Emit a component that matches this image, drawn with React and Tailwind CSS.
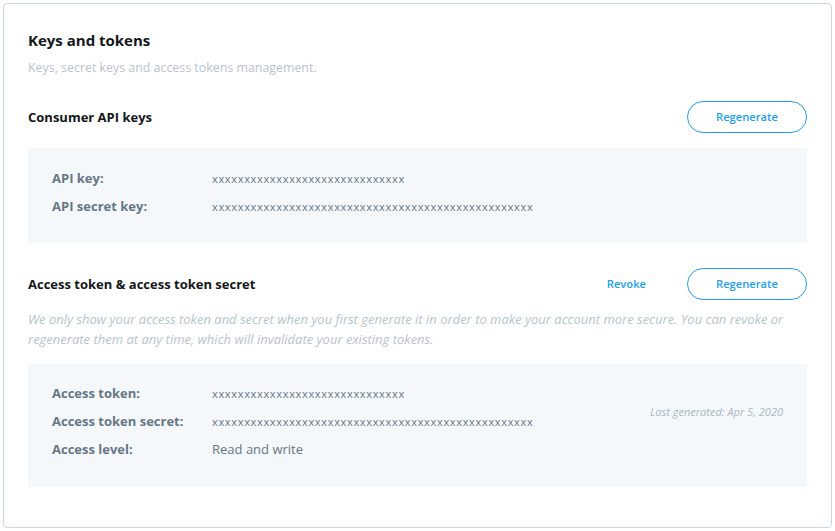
import React from "react";

const font = { fontFamily: '"Segoe UI", "Open Sans", "Noto Sans", sans-serif' };

const consumerKeys = [
  { id: 1, label: "API key:", value: "x".repeat(30) },
  { id: 2, label: "API secret key:", value: "x".repeat(50) },
];

const accessKeys = [
  { id: 1, label: "Access token:", value: "x".repeat(30), small: true },
  { id: 2, label: "Access token secret:", value: "x".repeat(50), small: true },
  { id: 3, label: "Access level:", value: "Read and write" },
];

const RegenerateBtn = () => (
  <button className="w-[120px] h-[32px] rounded-full border border-[#1da1f2] text-[#1da1f2] text-[11.2px] font-semibold bg-white">
    Regenerate
  </button>
);

const KeyRow = ({ label, value, small, first }) => (
  <div className={`flex items-center h-[20px] ${first ? "" : "mt-2"}`}>
    <span className="w-[160px] text-[13px] font-bold text-[#657786]">{label}</span>
    {small ? (
      <span className="text-[11px] text-[#657786] tracking-[0.67px]">{value}</span>
    ) : (
      <span className="text-[13px] text-[#657786]">{value}</span>
    )}
  </div>
);

const App = () => {
  return (
    <div className="w-[835px] h-[531px] bg-white p-[3px]" style={font}>
      <div className="w-[829px] h-[525px] border border-[#ccd6dd] rounded-[4px] px-6 pt-[26px] pb-[39px]">
        <h1 className="text-[15px] leading-[20px] font-bold text-[#14171a]">Keys and tokens</h1>
        <p className="mt-[10px] text-[12.4px] leading-[16px] text-[#b8c4cc]">
          Keys, secret keys and access tokens management.
        </p>

        <div className="mt-[25px] flex items-center justify-between">
          <h2 className="text-[13px] font-bold text-[#14171a] pt-[2px]">Consumer API keys</h2>
          <RegenerateBtn />
        </div>

        <div className="mt-[15px] bg-[#f5f8fa] pl-6 pt-[21px] pb-[26px]">
          {consumerKeys.map(({ id, label, value }) => (
            <KeyRow key={id} label={label} value={value} small first={id === 1} />
          ))}
        </div>

        <div className="mt-[25px] flex items-center justify-between">
          <h2 className="text-[13px] font-bold text-[#14171a] pt-[2px]">Access token &amp; access token secret</h2>
          <div className="flex items-center">
            <button className="text-[11.2px] font-semibold text-[#1da1f2] mr-[41px] pt-[1px]">Revoke</button>
            <RegenerateBtn />
          </div>
        </div>

        <p className="mt-[9px] text-[13px] leading-[20px] italic text-[#b8c4cc] pr-4">
          We only show your access token and secret when you first generate it in order to make your account more secure. You can revoke or regenerate them at any time, which will invalidate your existing tokens.
        </p>

        <div className="mt-[15px] bg-[#f5f8fa] pl-6 pr-6 pt-5 pb-[27px] flex justify-between">
          <div>
            {accessKeys.map(({ id, label, value, small }) => (
              <KeyRow key={id} label={label} value={value} small={small} first={id === 1} />
            ))}
          </div>
          <div className="mt-[20px] text-[11px] leading-[16px] italic text-[#aab8c2]">
            Last generated: Apr 5, 2020
          </div>
        </div>
      </div>
    </div>
  );
};

export default App;
